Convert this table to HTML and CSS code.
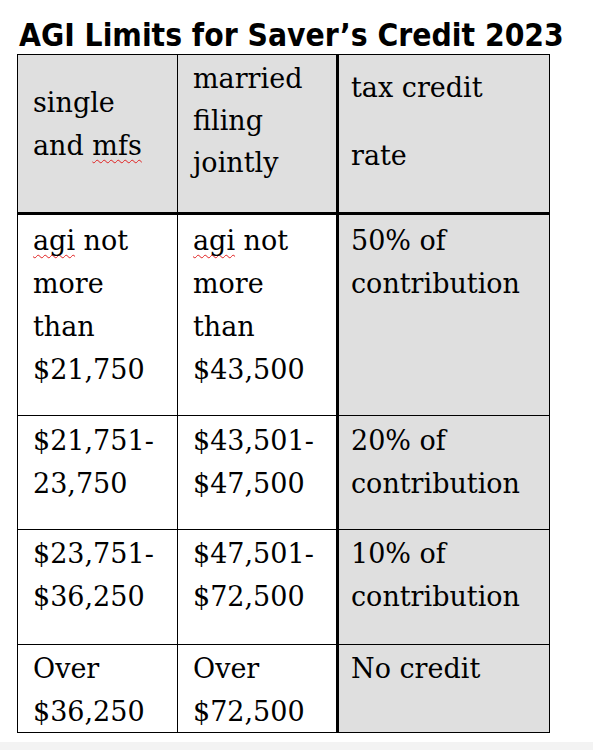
FILE: index.html
```html
<!DOCTYPE html>
<html lang="en">
<head>
<meta charset="utf-8">
<title>AGI Limits for Saver's Credit 2023</title>
<link rel="stylesheet" href="styles.css">
</head>
<body>
<div class="page">
  <h1 class="title">AGI Limits for Saver’s Credit 2023</h1>
  <div class="grid">
    <div class="cell head h1c">single<br>and <span class="spell">mfs</span></div>
    <div class="cell head h2c">married<br>filing<br>jointly</div>
    <div class="cell head h3c thick-r"><div>tax credit</div><div class="gap">rate</div></div>

    <div class="cell row1"><span class="spell">agi</span> not<br>more<br>than<br>$21,750</div>
    <div class="cell row1"><span class="spell">agi</span> not<br>more<br>than<br>$43,500</div>
    <div class="cell row1 shade rate">50% of<br>contribution</div>

    <div class="cell row2">$21,751-<br>23,750</div>
    <div class="cell row2">$43,501-<br>$47,500</div>
    <div class="cell row2 shade rate">20% of<br>contribution</div>

    <div class="cell row3">$23,751-<br>$36,250</div>
    <div class="cell row3">$47,501-<br>$72,500</div>
    <div class="cell row3 shade rate">10% of<br>contribution</div>

    <div class="cell row4">Over<br>$36,250</div>
    <div class="cell row4">Over<br>$72,500</div>
    <div class="cell row4 shade rate">No credit</div>
  </div>
</div>
<div class="strip"></div>
</body>
</html>
```

FILE: styles.css
```css
html, body {
  margin: 0;
  padding: 0;
  background: #ffffff;
}

body {
  width: 593px;
  height: 750px;
  overflow: hidden;
  display: flex;
  flex-direction: column;
}

.page {
  flex: 1;
  padding-left: 17px;
}

.title {
  margin: 17px 0 1px 2px;
  font-family: "DejaVu Sans Condensed", "DejaVu Sans", sans-serif;
  font-stretch: condensed;
  font-weight: bold;
  font-size: 31.5px;
  line-height: 36px;
  color: #000;
  white-space: nowrap;
}

.grid {
  display: grid;
  grid-template-columns: 160px 161px 211px;
  grid-template-rows: 160px 201px 114px 115px 88px;
  width: 533px;
  border-left: 1px solid #000;
  border-top: 1px solid #000;
  box-sizing: border-box;
  font-family: "DejaVu Serif", serif;
  font-size: 27px;
  line-height: 43px;
  color: #000;
}

.cell {
  border-right: 1px solid #000;
  border-bottom: 1px solid #000;
  padding-left: 15px;
  padding-top: 3px;
  overflow: hidden;
}

.cell.head {
  background: #dfdfdf;
  border-bottom-width: 3px;
}

.h1c {
  padding-top: 26px;
}

.h2c {
  padding-top: 3px;
  line-height: 42px;
}

.h3c {
  padding-left: 12px;
  padding-top: 11px;
}

.gap {
  margin-top: 25px;
}

.cell.shade {
  background: #dfdfdf;
}

.rate {
  padding-left: 12px;
}

.cell:nth-child(3n+2) {
  border-right-width: 3px;
}

.row1 {
  padding-top: 4px;
}

.row2 {
  padding-top: 3px;
}

.row3,
.row4 {
  padding-top: 2px;
}

.spell {
  text-decoration: underline wavy #e02020;
  text-decoration-thickness: 1px;
  text-underline-offset: 4px;
  text-decoration-skip-ink: none;
}

.strip {
  height: 8px;
  background: #f3f3f3;
}
```
